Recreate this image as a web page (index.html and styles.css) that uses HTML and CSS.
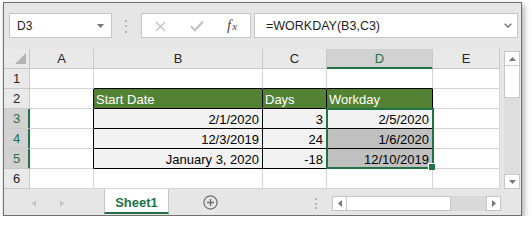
FILE: index.html
```html
<!DOCTYPE html>
<html>
<head>
<meta charset="utf-8">
<title>WORKDAY</title>
<link rel="stylesheet" href="styles.css">
</head>
<body>
<div class="window">
  <div class="toolbar">
    <div class="namebox">
      <span class="nb-text">D3</span>
      <svg class="nb-arrow" width="7" height="4" viewBox="0 0 7 4"><path d="M0 0H7L3.5 4Z" fill="#767676"/></svg>
    </div>
    <div class="vdots"><i></i><i></i><i></i></div>
    <div class="fbtns">
      <svg class="ic-x" width="11" height="11" viewBox="0 0 11 11"><path d="M1 1L10 10M10 1L1 10" stroke="#c2c2c2" stroke-width="1.3" fill="none"/></svg>
      <svg class="ic-check" width="14" height="12" viewBox="0 0 14 12"><path d="M1 6.2L5 10.2L13 1.5" stroke="#c2c2c2" stroke-width="2" fill="none"/></svg>
      <span class="fx">f<span class="fx-x">x</span></span>
    </div>
    <div class="finput">
      <span class="ftext">=WORKDAY(B3,C3)</span>
      <svg class="chev" width="8" height="5" viewBox="0 0 8 5"><path d="M0.7 0.7L4 4L7.3 0.7" stroke="#777" stroke-width="1.5" fill="none"/></svg>
    </div>
  </div>

  <div class="main">
    <div class="sheet">
      <div class="grid">
        <div class="c h corner"><svg width="24" height="19" viewBox="0 0 24 19"><path d="M22 4V15H11Z" fill="#b5b5b5"/></svg></div>
        <div class="c h">A</div>
        <div class="c h">B</div>
        <div class="c h">C</div>
        <div class="c h ch-sel">D</div>
        <div class="c h">E</div>

        <div class="c h rh">1</div>
        <div class="c"></div>
        <div class="c bb"></div>
        <div class="c bb"></div>
        <div class="c bb"></div>
        <div class="c"></div>

        <div class="c h rh">2</div>
        <div class="c br"></div>
        <div class="c t th">Start Date</div>
        <div class="c t th">Days</div>
        <div class="c t th">Workday</div>
        <div class="c"></div>

        <div class="c h rh rh-sel">3</div>
        <div class="c br"></div>
        <div class="c t td r">2/1/2020</div>
        <div class="c t td r">3</div>
        <div class="c t td r">2/5/2020</div>
        <div class="c"></div>

        <div class="c h rh rh-sel">4</div>
        <div class="c br"></div>
        <div class="c t td r">12/3/2019</div>
        <div class="c t td r">24</div>
        <div class="c t sel r">1/6/2020</div>
        <div class="c"></div>

        <div class="c h rh rh-sel">5</div>
        <div class="c br"></div>
        <div class="c t td r">January 3, 2020</div>
        <div class="c t td r">-18</div>
        <div class="c t sel r">12/10/2019</div>
        <div class="c"></div>

        <div class="c h rh">6</div>
        <div class="c"></div>
        <div class="c"></div>
        <div class="c"></div>
        <div class="c"></div>
        <div class="c"></div>
      </div>
      <div class="selection"><span class="handle"></span></div>
    </div>
    <div class="vscroll">
      <div class="vbar">
        <div class="sbtn up"><svg width="7" height="4" viewBox="0 0 7 4"><path d="M0 4H7L3.5 0Z" fill="#777"/></svg></div>
        <div class="vthumb"></div>
        <div class="vtrack"></div>
        <div class="sbtn down"><svg width="7" height="4" viewBox="0 0 7 4"><path d="M0 0H7L3.5 4Z" fill="#777"/></svg></div>
      </div>
    </div>
  </div>

  <div class="tabbar">
    <div class="tabnav">
      <svg class="nav-l" width="4" height="7" viewBox="0 0 4 7"><path d="M4 0V7L0 3.5Z" fill="#c4c4c4"/></svg>
      <svg class="nav-r" width="4" height="7" viewBox="0 0 4 7"><path d="M0 0V7L4 3.5Z" fill="#c4c4c4"/></svg>
    </div>
    <div class="tab">Sheet1</div>
    <svg class="addbtn" width="15" height="15" viewBox="0 0 15 15"><circle cx="7.5" cy="7.5" r="6.6" stroke="#6e6e6e" stroke-width="1.2" fill="none"/><path d="M7.5 4V11M4 7.5H11" stroke="#6e6e6e" stroke-width="1.3"/></svg>
    <div class="hdots"><i></i><i></i><i></i></div>
    <div class="hscroll">
      <div class="sbtn hl"><svg width="4" height="7" viewBox="0 0 4 7"><path d="M4 0V7L0 3.5Z" fill="#777"/></svg></div>
      <div class="hthumb"></div>
      <div class="htrack"></div>
      <div class="sbtn hr"><svg width="4" height="7" viewBox="0 0 4 7"><path d="M0 0V7L4 3.5Z" fill="#777"/></svg></div>
    </div>
  </div>
</div>
</body>
</html>
```

FILE: styles.css
```css
* { box-sizing: border-box; }
html, body { margin: 0; padding: 0; background: #fff; }
body {
  padding: 2px 0 0 3px;
  font-family: "Liberation Sans", Arial, sans-serif;
  font-size: 13px;
  color: #000;
}

.window {
  width: 519px;
  height: 214px;
  border: 1px solid #707070;
  background: #e6e6e6;
  box-shadow: 2px 3px 6px rgba(0, 0, 0, 0.35);
  display: flex;
  flex-direction: column;
}

/* ---------- formula bar ---------- */
.toolbar {
  height: 46px;
  flex: none;
  display: flex;
  align-items: flex-start;
  padding: 10px 3px 0 5px;
}
.namebox {
  width: 103px;
  height: 25px;
  border: 1px solid #c6c6c6;
  background: #fff;
  display: flex;
  align-items: center;
  justify-content: space-between;
  padding: 0 7px 0 7px;
}
.nb-text { font-size: 12px; line-height: 15px; color: #222; padding-top: 2px; }
.nb-arrow { display: block; margin-top: 1px; }

.vdots {
  margin-left: 13px;
  width: 2px;
  height: 25px;
  display: flex;
  flex-direction: column;
  justify-content: center;
  gap: 3.5px;
  padding-top: 1px;
}
.vdots i, .hdots i { display: block; width: 2px; height: 2px; background: #b3b3b3; }

.fbtns {
  margin-left: 14px;
  width: 110px;
  height: 25px;
  border: 1px solid #c6c6c6;
  background: #fff;
  display: flex;
  align-items: center;
  padding-left: 13px;
}
.ic-x { display: block; margin-top: 1px; }
.ic-check { display: block; margin-left: 24px; margin-top: 1px; }
.fx {
  margin-left: 23px;
  font-family: "Liberation Serif", "Times New Roman", serif;
  font-style: italic;
  font-size: 15px;
  line-height: 15px;
  color: #4a4a4a;
  padding-top: 1px;
}
.fx-x { font-size: 11px; margin-left: 1px; }

.finput {
  margin-left: 3px;
  flex: 1;
  height: 25px;
  border: 1px solid #c6c6c6;
  background: #fff;
  display: flex;
  align-items: center;
  justify-content: space-between;
  padding: 0 5px 0 11px;
}
.ftext { font-size: 12.5px; line-height: 15px; color: #1e1e1e; padding-top: 1px; }
.chev { display: block; margin-top: -1px; }

/* ---------- sheet grid ---------- */
.main {
  height: 140px;
  flex: none;
  display: flex;
}
.sheet { position: relative; width: 496px; flex: none; }
.grid {
  display: grid;
  grid-template-columns: 26px 64px 169px 64px 106px 67px;
  grid-auto-rows: 20px;
}
.c {
  border-right: 1px solid #d4d4d4;
  border-bottom: 1px solid #d4d4d4;
  background: #fff;
  display: flex;
  align-items: flex-end;
  line-height: 15px;
  padding: 0 3px 1px 2px;
  white-space: nowrap;
  overflow: hidden;
}
.r { justify-content: flex-end; }
.h {
  background: #e9e9e9;
  border-color: #c9c9c9;
  justify-content: center;
  align-items: center;
  padding: 0;
  color: #262626;
}
.corner { align-items: stretch; justify-content: flex-start; }
.corner svg { display: block; }
.ch-sel {
  background: #d2d2d2;
  color: #217346;
  border-bottom-color: #217346;
  box-shadow: inset 0 -1px 0 #217346;
}
.rh-sel {
  background: #d2d2d2;
  color: #217346;
  border-right-color: #217346;
  box-shadow: inset -1px 0 0 #217346;
}
.bb { border-bottom-color: #000; }
.br { border-right-color: #000; }
.t { border-right-color: #000; border-bottom-color: #000; }
.th { background: #548235; color: #fff; }
.td { background: #f2f2f2; }
.sel { background: #c0c0c0; }

.selection {
  position: absolute;
  left: 322px;
  top: 59px;
  width: 108px;
  height: 61px;
  border: 2px solid #217346;
  pointer-events: none;
}
.handle {
  position: absolute;
  right: -3px;
  bottom: -3px;
  width: 6px;
  height: 6px;
  background: #217346;
  box-shadow: -1px -1px 0 #fff;
}

/* ---------- vertical scrollbar ---------- */
.vscroll { width: 21px; flex: none; padding: 2px 0 0 4px; }
.vbar { width: 16px; height: 138px; display: flex; flex-direction: column; }
.sbtn {
  background: #fff;
  border: 1px solid #c6c6c6;
  display: flex;
  align-items: center;
  justify-content: center;
  flex: none;
}
.sbtn svg { display: block; }
.up, .down { height: 15px; }
.vthumb { height: 32px; background: #fff; border: 1px solid #c6c6c6; border-top: none; flex: none; }
.vtrack { flex: 1; background: #dedede; }

/* ---------- sheet tabs ---------- */
.tabbar {
  height: 26px;
  flex: none;
  display: flex;
  align-items: flex-start;
}
.tabnav { width: 100px; height: 25px; display: flex; align-items: center; padding-top: 3px; }
.nav-l { display: block; margin-left: 28px; }
.nav-r { display: block; margin-left: 24px; }
.tab {
  width: 65px;
  height: 25px;
  background: #fff;
  border-left: 1px solid #c6c6c6;
  border-right: 1px solid #c6c6c6;
  border-bottom: 2px solid #217346;
  text-align: center;
  font-weight: bold;
  font-size: 13px;
  line-height: 15px;
  padding-top: 6px;
  color: #217346;
}
.addbtn { display: block; margin: 6px 0 0 34px; flex: none; }
.hdots {
  margin: 9px 0 0 97px;
  width: 2px;
  display: flex;
  flex-direction: column;
  gap: 2.5px;
}
.hscroll {
  margin: 7px 0 0 15px;
  width: 169px;
  height: 15px;
  display: flex;
}
.hl, .hr { width: 15px; height: 15px; }
.hthumb { width: 104px; background: #fff; border: 1px solid #c6c6c6; border-left: none; }
.htrack { width: 35px; background: #d9d9d9; }
```
